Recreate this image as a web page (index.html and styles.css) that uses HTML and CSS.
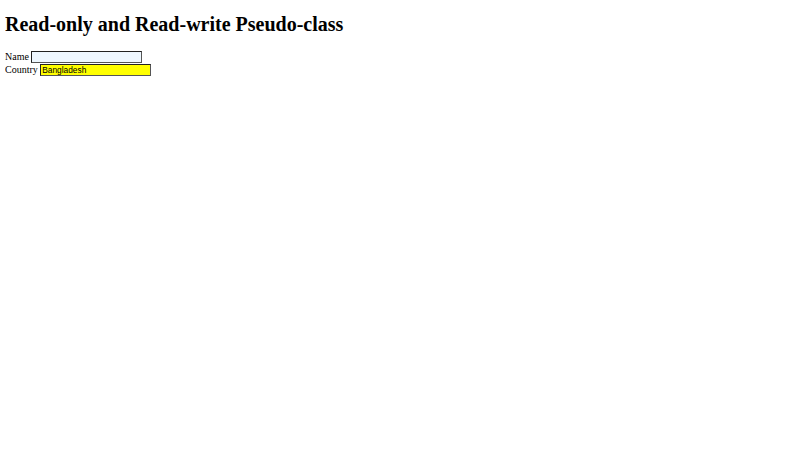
FILE: index.html
```html
<!DOCTYPE html>
<html>
<head>
<meta charset="utf-8">
<link rel="stylesheet" href="styles.css">
</head>
<body class="page">
<h1 class="title">Read-only and Read-write Pseudo-class</h1>
<form class="form">
<label class="label">Name</label> <input class="field field-rw" type="text"><br>
<label class="label">Country</label> <input class="field field-ro" type="text" value="Bangladesh" readonly>
</form>
</body>
</html>
```
FILE: styles.css
```css
.page {
  margin: 5px;
  font-family: "Liberation Serif", "Times New Roman", serif;
  font-size: 10px;
  color: #000;
  background: #fff;
}
.title {
  font-size: 20px;
  font-weight: bold;
  margin: 8.4px 0 13.4px;
}
.form {
  margin: 0;
  line-height: 13px;
}
.field {
  font-family: "Liberation Sans", Arial, sans-serif;
  font-size: 8.33px;
  width: 107px;
  height: 10px;
  padding: 0 1px;
  border: 1.5px solid #222;
  border-color: #222 #555 #555 #222;
  margin: 0;
  vertical-align: baseline;
  box-sizing: content-box;
}
.field-rw {
  background: #eef7ff;
}
.field-ro {
  background: #ffff00;
  color: #000;
  outline: none;
}
```
